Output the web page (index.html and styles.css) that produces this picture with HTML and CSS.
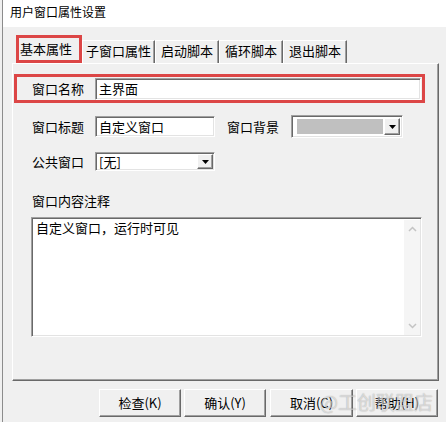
FILE: index.html
```html
<!DOCTYPE html>
<html lang="zh-CN">
<head>
<meta charset="utf-8">
<link rel="stylesheet" href="styles.css">
</head>
<body>
<div class="win">
  <div class="titlebar">用户窗口属性设置</div>
  <div class="tabs">
    <div class="tab sel">基本属性</div>
    <div class="tab w73">子窗口属性</div>
    <div class="tab">启动脚本</div>
    <div class="tab">循环脚本</div>
    <div class="tab">退出脚本</div>
  </div>
  <div class="panel">
    <div class="namebox">
      <span class="label">窗口名称</span>
      <div class="field name">主界面</div>
    </div>
    <div class="row r2">
      <span class="label">窗口标题</span>
      <div class="field title">自定义窗口</div>
      <span class="label bg">窗口背景</span>
      <div class="field colorcombo">
        <div class="swatch"></div>
        <div class="drop"><svg width="7" height="4" viewBox="0 0 7 4"><path d="M0 0h7L3.5 4z" fill="#000"/></svg></div>
      </div>
    </div>
    <div class="row r3">
      <span class="label">公共窗口</span>
      <div class="field combo">
        <span class="ctext">[无]</span>
        <div class="drop"><svg width="7" height="4" viewBox="0 0 7 4"><path d="M0 0h7L3.5 4z" fill="#000"/></svg></div>
      </div>
    </div>
    <div class="notelabel">窗口内容注释</div>
    <div class="field memo">
      <div class="memotext">自定义窗口，运行时可见</div>
      <div class="scroll">
        <svg width="9" height="6" viewBox="0 0 9 6"><path d="M1 5L4.5 1.5L8 5" fill="none" stroke="#c4c4c4" stroke-width="1.5"/></svg>
        <svg width="9" height="6" viewBox="0 0 9 6"><path d="M1 1L4.5 4.5L8 1" fill="none" stroke="#c4c4c4" stroke-width="1.5"/></svg>
      </div>
    </div>
  </div>
  <div class="buttons">
    <div class="btn">检查(K)</div>
    <div class="btn">确认(Y)</div>
    <div class="btn c">取消(C)</div>
    <div class="btn">帮助(H)</div>
  </div>
  <div class="watermark">@工创联盟店</div>
</div>
</body>
</html>
```

FILE: styles.css
```css
html, body {
  margin: 0;
  padding: 0;
  background: #f0f0f0;
}
body {
  font-family: "Noto Sans CJK SC", "Noto Sans", sans-serif;
  font-size: 13px;
  color: #000;
}
.win {
  position: relative;
  margin-left: 2px;
  border-left: 1px solid #8c8c8c;
  height: 422px;
  box-sizing: border-box;
  overflow: hidden;
}
.titlebar {
  height: 27px;
  background: #fff;
  padding-left: 7px;
  font-size: 12px;
  line-height: 24px;
}
.tabs {
  display: flex;
  align-items: flex-end;
  margin-top: 8px;
  height: 28px;
  padding-left: 13px;
}
.tab {
  box-sizing: border-box;
  width: 64px;
  height: 23px;
  border-top: 1px solid #fff;
  border-left: 1px solid #fff;
  border-right: 1px solid #696969;
  box-shadow: inset -1px 0 #a0a0a0;
  text-align: center;
  line-height: 20px;
  white-space: nowrap;
}
.tab.w73 { width: 73px; }
.tab.sel {
  width: 66px;
  height: 28px;
  border: 3px solid #dc4646;
  box-shadow: none;
  text-align: left;
  padding-left: 1px;
  line-height: 21px;
}
.panel {
  box-sizing: border-box;
  margin-left: 9px;
  width: 427px;
  height: 318px;
  border-top: 1px solid #fff;
  border-left: 1px solid #fff;
  border-right: 1px solid #696969;
  border-bottom: 1px solid #696969;
  box-shadow: inset -1px -1px #a0a0a0;
}
.label {
  width: 63px;
  flex: none;
  white-space: nowrap;
}
.field {
  box-sizing: border-box;
  background: #fff;
  border: 1px solid;
  border-color: #a0a0a0 #fff #fff #a0a0a0;
  box-shadow: inset 1px 1px #696969, inset -1px -1px #e3e3e3;
  white-space: nowrap;
}
.namebox {
  box-sizing: border-box;
  display: flex;
  align-items: center;
  margin: 10px 0 0 1px;
  width: 411px;
  height: 29px;
  border: 3px solid #dc4646;
  padding-left: 15px;
  padding-right: 1px;
}
.field.name {
  flex: 1;
  height: 22px;
  padding-left: 3px;
  line-height: 20px;
}
.row {
  display: flex;
  align-items: center;
  padding-left: 19px;
}
.r2 { margin-top: 12px; height: 23px; }
.r3 { margin-top: 14px; height: 19px; }
.field.title {
  width: 120px;
  height: 21px;
  padding-left: 3px;
  line-height: 19px;
}
.label.bg { margin-left: 12px; width: 64px; }
.colorcombo {
  display: flex;
  align-items: center;
  width: 112px;
  height: 23px;
  padding: 2px 2px 2px 5px;
}
.swatch {
  width: 86px;
  height: 15px;
  background: #c0c0c0;
}
.drop {
  box-sizing: border-box;
  margin-left: auto;
  width: 16px;
  height: 100%;
  background: #f0f0f0;
  border: 1px solid;
  border-color: #fff #696969 #696969 #fff;
  box-shadow: inset -1px -1px #a0a0a0;
  display: flex;
  align-items: center;
  justify-content: center;
}
.drop svg { display: block; }
.combo {
  display: flex;
  align-items: center;
  width: 120px;
  height: 19px;
  padding: 1px 1px 1px 3px;
}
.ctext { line-height: 16px; }
.notelabel {
  margin-top: 22px;
  padding-left: 19px;
  line-height: 16px;
}
.memo {
  display: flex;
  margin: 8px 0 0 18px;
  width: 391px;
  height: 120px;
  padding: 2px 1px 1px 2px;
}
.memotext {
  flex: 1;
  padding-left: 2px;
  line-height: 16px;
}
.scroll {
  width: 16px;
  background: #f5f5f5;
  display: flex;
  flex-direction: column;
  align-items: center;
  justify-content: space-between;
  padding: 6px 0 6px;
}
.scroll svg { display: block; }
.buttons {
  display: flex;
  margin-top: 8px;
  padding-left: 96px;
}
.btn {
  box-sizing: border-box;
  width: 82px;
  height: 28px;
  border: 1px solid;
  border-color: #fff #696969 #696969 #fff;
  box-shadow: inset -1px -1px #a0a0a0;
  text-align: center;
  line-height: 25px;
  white-space: nowrap;
}
.btn + .btn { margin-left: 3px; }
.btn.c { margin-left: 4px; width: 83px; }
.watermark {
  position: absolute;
  left: 317px;
  top: 390px;
  font-size: 19px;
  line-height: 24px;
  color: rgba(255, 255, 255, 0.55);
  text-shadow: 0 0 1px rgba(0, 0, 0, 0.35);
  white-space: nowrap;
  pointer-events: none;
}
```
